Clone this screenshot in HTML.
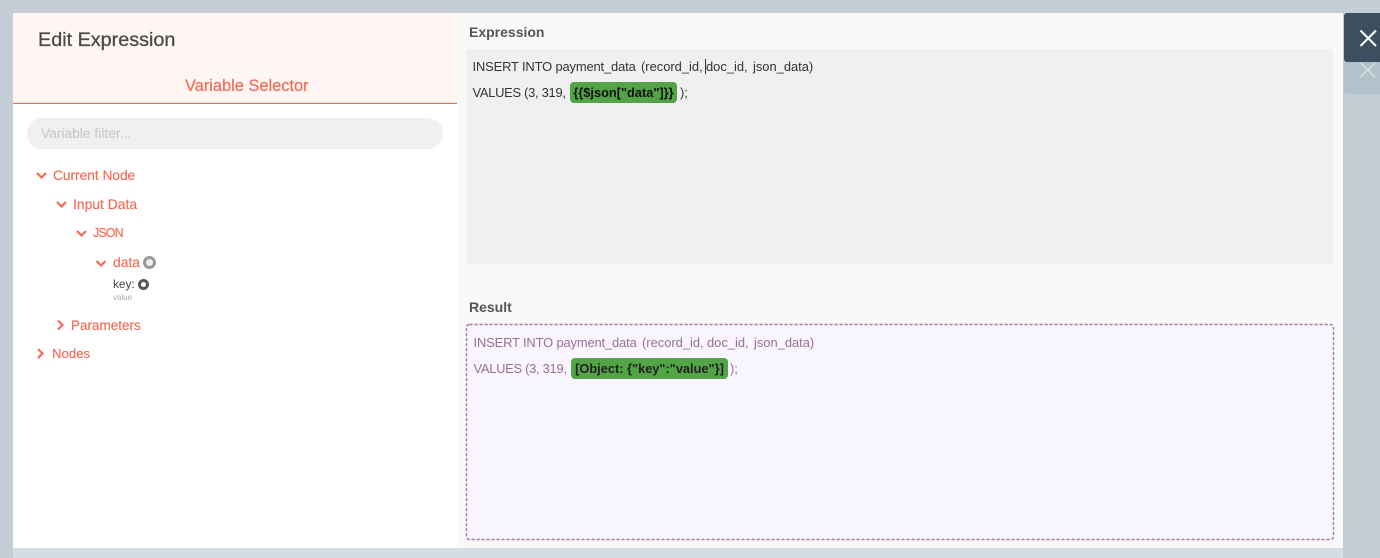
<!DOCTYPE html>
<html><head><meta charset="utf-8"><style>
html,body{margin:0;padding:0;width:1380px;height:558px;overflow:hidden;background:#c5ced6;position:relative}
div,svg{position:absolute}
.t{position:absolute;white-space:nowrap;font-family:"Liberation Sans",sans-serif;line-height:20px}
.h{position:absolute;white-space:nowrap;font-family:"Liberation Sans",sans-serif;font-size:12.9px;line-height:20px}
.e{color:#333}
.p{color:#9a6f96}
.r{color:#f26b56;font-size:13.7px;-webkit-text-stroke:.15px #f26b56}
.g{position:absolute;white-space:nowrap;font-family:"Liberation Sans",sans-serif;background:#52a447;color:#111;font-weight:bold;border-radius:4px;height:21px;line-height:21px;text-align:center;font-size:12.8px}
</style></head><body>
<div style="left:13px;top:548px;width:1367px;height:10px;background:#d5dde2"></div>
<div style="left:1343px;top:548px;width:37px;height:10px;background:#c5ced6"></div>
<div style="left:13px;top:13px;width:444px;height:535px;background:#fff"></div>
<div style="left:457px;top:13px;width:886px;height:535px;background:#f9f9f9"></div>
<div style="left:13px;top:13px;width:444px;height:90px;background:#fff5f2"></div>
<div style="left:13px;top:102px;width:444px;height:1px;background:#fbe0da"></div>
<div style="left:13px;top:103px;width:444px;height:1px;background:#f0705c"></div>
<span class="t" style="left:38px;top:30px;font-size:19.8px;color:#4a4a4a;-webkit-text-stroke:.3px #4a4a4a">Edit Expression</span>
<span class="t" style="left:185px;top:76px;font-size:16.4px;color:#f26b56;-webkit-text-stroke:.2px #f26b56">Variable Selector</span>
<div style="left:27px;top:118px;width:416px;height:31px;border-radius:16px;background:#f0f0f0"></div>
<span class="t" style="left:41px;top:124px;font-size:13.8px;color:#c3c5c9">Variable filter...</span>

<svg style="left:0;top:0" width="460" height="370" fill="none" stroke="#f26b56" stroke-width="2.2">
<path d="M37 173l4.500 4.500 4.500-4.500M57 202l4.500 4.500 4.500-4.500M77 231l4.500 4.500 4.500-4.500M96.500 261l4.500 4.500 4.500-4.500M58 320.500l4.500 4.500-4.500 4.500M38 349l4.500 4.500-4.500 4.500"/>
</svg>
<span class="t r" style="left:53px;top:166px">Current Node</span>
<span class="t r" style="left:73px;top:194px;font-size:13.9px">Input Data</span>
<span class="t r" style="left:93px;top:223px;font-size:12.5px;letter-spacing:-.9px">JSON</span>
<span class="t r" style="left:113px;top:252px;font-size:13.9px">data</span>
<div style="left:142.500px;top:255.500px;width:7px;height:7px;border:3.500px solid #999;border-radius:50%;background:#eee"></div>
<span class="t" style="left:113px;top:274px;font-size:11.800px;color:#444">key:</span>
<div style="left:138px;top:278.500px;width:5px;height:5px;border:3px solid #555;border-radius:50%;background:#fff"></div>
<span class="t" style="left:113px;top:288px;font-size:8px;color:#aaa">value</span>
<span class="t r" style="left:71px;top:316px;font-size:13.5px">Parameters</span>
<span class="t r" style="left:52px;top:344px;font-size:13.2px">Nodes</span>

<span class="t" style="left:469px;top:22px;font-size:14px;color:#555;font-weight:bold">Expression</span>
<div style="left:466px;top:49px;width:867px;height:215px;background:#f0f0f0;border-radius:3px"></div>
<span class="h e" style="left:472.500px;top:57px;letter-spacing:-.13px">INSERT INTO payment_data</span>
<span class="h e" style="left:641px;top:57px">(record_id,</span>
<span class="h e" style="left:706px;top:57px">doc_id,</span>
<span class="h e" style="left:753px;top:57px">json_data)</span>
<div style="left:705px;top:59px;width:1px;height:15px;background:#333"></div>
<span class="h e" style="left:472.500px;top:83px;letter-spacing:-.27px">VALUES (3, 319,</span>
<span class="g" style="left:570px;top:82px;width:107px">{{$json["data"]}}</span>
<span class="h e" style="left:680px;top:83px">);</span>

<span class="t" style="left:469px;top:297px;font-size:14px;color:#555;font-weight:bold">Result</span>
<svg style="left:465px;top:323px" width="870" height="218"><rect x="1.500" y="1.500" width="867" height="215" rx="3" fill="#f8f5ff" stroke="#a67ea3" stroke-width="1.400" stroke-dasharray="3.200 1.800"/></svg>
<span class="h p" style="left:473.500px;top:333px;letter-spacing:-.13px">INSERT INTO payment_data</span>
<span class="h p" style="left:642px;top:333px">(record_id,</span>
<span class="h p" style="left:707px;top:333px">doc_id,</span>
<span class="h p" style="left:754px;top:333px">json_data)</span>
<span class="h p" style="left:473.500px;top:359px;letter-spacing:-.27px">VALUES (3, 319,</span>
<span class="g" style="left:571px;top:358px;width:157px;color:#222">[Object: {"key":"value"}]</span>
<span class="h p" style="left:730px;top:359px">);</span>

<div style="left:1344px;top:62px;width:36px;height:32px;background:#b3c1ca;border-radius:0 0 0 3px"></div>
<svg style="left:1344px;top:62px" width="36" height="32" fill="none" stroke="#d5dde2" stroke-width="1.800"><path d="M16.500 1L31 15M31 1L16.500 15"/></svg>
<div style="left:1344px;top:13px;width:36px;height:49px;background:#3d4f5e;border-radius:3px 0 0 3px"></div>
<svg style="left:1344px;top:13px" width="36" height="49" fill="none" stroke="#fff" stroke-width="2"><path d="M16.500 17.500L32 33M32 17.500L16.500 33"/></svg>
</body></html>
